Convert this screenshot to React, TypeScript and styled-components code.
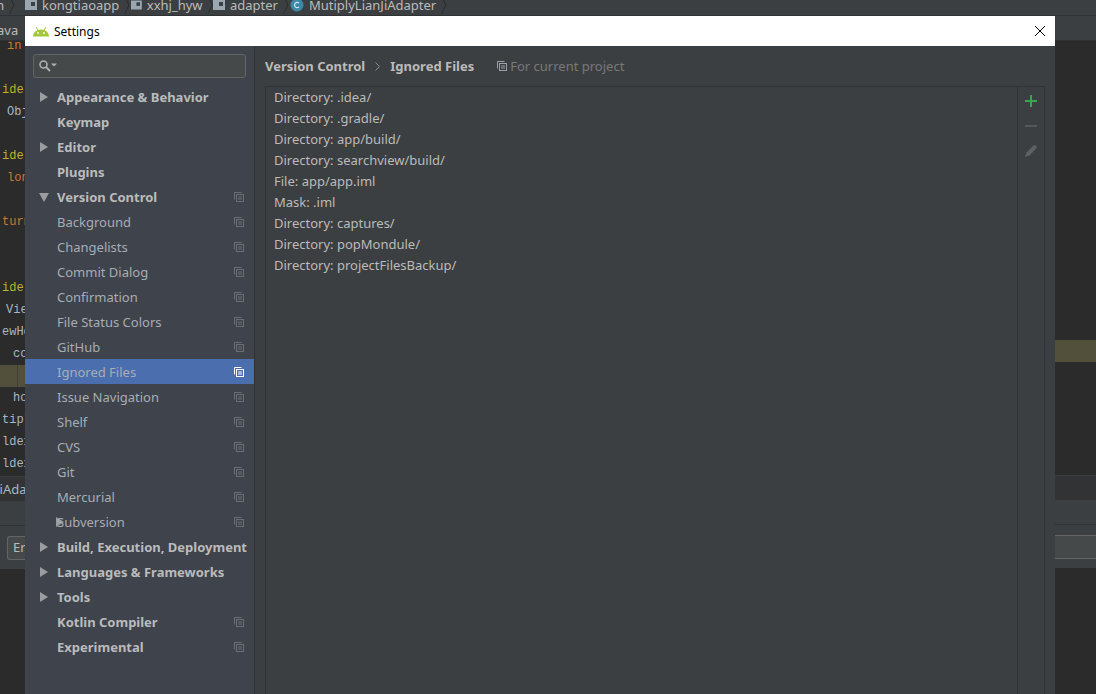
import React from 'react';
import styled, { createGlobalStyle } from 'styled-components';

// --- Dados ---
type NavItem = {
  label: string;
  level: 0 | 1;
  arrow?: 'right' | 'down';
  copy?: boolean;
  selected?: boolean;
};

const navItems: NavItem[] = [
  { label: 'Appearance & Behavior', level: 0, arrow: 'right' },
  { label: 'Keymap', level: 0 },
  { label: 'Editor', level: 0, arrow: 'right' },
  { label: 'Plugins', level: 0 },
  { label: 'Version Control', level: 0, arrow: 'down', copy: true },
  { label: 'Background', level: 1, copy: true },
  { label: 'Changelists', level: 1, copy: true },
  { label: 'Commit Dialog', level: 1, copy: true },
  { label: 'Confirmation', level: 1, copy: true },
  { label: 'File Status Colors', level: 1, copy: true },
  { label: 'GitHub', level: 1, copy: true },
  { label: 'Ignored Files', level: 1, copy: true, selected: true },
  { label: 'Issue Navigation', level: 1, copy: true },
  { label: 'Shelf', level: 1, copy: true },
  { label: 'CVS', level: 1, copy: true },
  { label: 'Git', level: 1, copy: true },
  { label: 'Mercurial', level: 1, copy: true },
  { label: 'Subversion', level: 1, arrow: 'right', copy: true },
  { label: 'Build, Execution, Deployment', level: 0, arrow: 'right' },
  { label: 'Languages & Frameworks', level: 0, arrow: 'right' },
  { label: 'Tools', level: 0, arrow: 'right' },
  { label: 'Kotlin Compiler', level: 0, copy: true },
  { label: 'Experimental', level: 0, copy: true },
];

const ignoredFiles = [
  'Directory: .idea/',
  'Directory: .gradle/',
  'Directory: app/build/',
  'Directory: searchview/build/',
  'File: app/app.iml',
  'Mask: .iml',
  'Directory: captures/',
  'Directory: popMondule/',
  'Directory: projectFilesBackup/',
];

type CodeKind = 'plain' | 'keyword' | 'note';
const codeLines: { text: string; kind?: CodeKind; indent?: number; marked?: boolean }[] = [
  { text: 'in', kind: 'keyword', indent: 7 },
  { text: '' },
  { text: 'ide', kind: 'note' },
  { text: 'Obj', indent: 7 },
  { text: '' },
  { text: 'ide', kind: 'note' },
  { text: 'lon', kind: 'keyword', indent: 7 },
  { text: '' },
  { text: 'turn', kind: 'keyword' },
  { text: '' },
  { text: '' },
  { text: 'ide', kind: 'note' },
  { text: 'Vie', indent: 6 },
  { text: 'ewHo' },
  { text: 'co', indent: 13 },
  { text: '', marked: true },
  { text: 'ho', indent: 13 },
  { text: 'tipl' },
  { text: 'ldex' },
  { text: 'ldex' },
];

// --- Estilização ---
const GlobalStyle = createGlobalStyle`
  html, body {
    margin: 0;
    padding: 0;
    background: #2b2b2b;
  }
`;

const Screen = styled.div`
  position: relative;
  width: 1096px;
  height: 694px;
  overflow: hidden;
  background: #2b2b2b;
  font-family: 'Noto Sans', sans-serif;
  font-size: 13px;
  color: #bbbbbb;
`;

const Breadcrumbs = styled.div`
  display: flex;
  align-items: flex-end;
  height: 15px;
  padding-bottom: 0;
  background: #3c3f41;
  border-bottom: 1px solid #2f3132;
  overflow: hidden;
  line-height: 18px;
  white-space: nowrap;
`;

const Crumb = styled.div<{ $width: number }>`
  display: flex;
  flex: none;
  align-items: center;
  gap: 5px;
  width: ${(p) => p.$width}px;
  height: 18px;
  margin-bottom: 1px;
`;

const IdeBody = styled.div`
  display: flex;
  justify-content: space-between;
  height: 678px;
`;

const EditorSide = styled.div<{ $width: number }>`
  width: ${(p) => p.$width}px;
  overflow: hidden;
`;

const TabBar = styled.div`
  position: relative;
  z-index: 1;
  box-sizing: border-box;
  height: 25px;
  background: #3c3f41;
  border-bottom: 1px solid #323232;
  font-size: 13px;
  line-height: 28px;
  text-indent: -3px;
  white-space: nowrap;
`;

const Code = styled.div`
  margin-top: -6px;
  height: 441px;
  font-family: 'Liberation Mono', monospace;
  font-size: 12px;
  line-height: 22px;
  white-space: pre;
`;

const CodeLine = styled.div<{ $kind?: CodeKind; $indent?: number; $marked?: boolean }>`
  height: 22px;
  padding-left: ${(p) => 2 + (p.$indent ?? 0) - (p.$indent ? 2 : 0)}px;
  background: ${(p) => (p.$marked ? 'linear-gradient(90deg, #52503a 17px, #3f3f36 17px, #3f3f36 18px, #52503a 18px)' : 'none')};
  color: ${(p) => (p.$kind === 'keyword' ? '#cc7832' : p.$kind === 'note' ? '#bbb529' : '#a9b7c6')};
`;

const FileTab = styled.div`
  box-sizing: border-box;
  height: 25px;
  background: #313335;
  border-top: 1px solid #3a3c3e;
  color: #a9b7c6;
  line-height: 24px;
  text-indent: -4px;
  white-space: nowrap;
`;

const ToolStrip = styled.div`
  box-sizing: border-box;
  height: 25px;
  background: #3c3f41;
  border-bottom: 1px solid #323232;
`;

const FilterArea = styled.div`
  height: 43px;
  box-sizing: border-box;
  padding-top: 10px;
  background: #3c3f41;
`;

const FilterInput = styled.div<{ $side: 'left' | 'right' }>`
  box-sizing: border-box;
  height: 24px;
  margin-left: ${(p) => (p.$side === 'left' ? '7px' : '0')};
  padding-left: 5px;
  background: #45494a;
  border: 1px solid #646464;
  border-left-width: ${(p) => (p.$side === 'left' ? '1px' : '0')};
  border-right-width: 0;
  border-radius: ${(p) => (p.$side === 'left' ? '3px 0 0 3px' : '0')};
  line-height: 21px;
  white-space: nowrap;
  overflow: hidden;
`;

const MarkedLine = styled.div`
  height: 22px;
  background: #52503a;
`;

const SideTabBar = styled.div`
  box-sizing: border-box;
  height: 26px;
  background: #3c3f41;
  border-top: 1px solid #4a4c4d;
  border-bottom: 1px solid #4a4c4d;
`;

const Spacer = styled.div<{ $height: number }>`
  height: ${(p) => p.$height}px;
`;

const Dialog = styled.div`
  position: absolute;
  left: 25px;
  top: 16px;
  display: flex;
  flex-direction: column;
  width: 1030px;
  height: 678px;
  background: #3c3f41;
`;

const TitleBar = styled.div`
  display: flex;
  flex: none;
  align-items: center;
  gap: 5px;
  height: 30px;
  padding: 0 10px 0 8px;
  background: #ffffff;
  color: #000000;
  font-size: 12px;
`;

const CloseButton = styled.div`
  display: flex;
  margin-left: auto;
`;

const Columns = styled.div`
  display: flex;
  flex: 1;
  min-height: 0;
`;

const Sidebar = styled.nav`
  flex: none;
  box-sizing: border-box;
  width: 230px;
  padding-top: 8px;
  background: #3e434c;
  border-right: 1px solid #323232;
`;

const SearchBox = styled.div`
  display: flex;
  align-items: center;
  box-sizing: border-box;
  width: 213px;
  height: 24px;
  margin: 0 0 6px 8px;
  padding-left: 5px;
  background: #45494a;
  border: 1px solid #646464;
  border-radius: 3px;
`;

const NavRow = styled.div<{ $selected?: boolean }>`
  display: flex;
  align-items: center;
  height: 25px;
  padding-right: 10px;
  background: ${(p) => (p.$selected ? '#4b6eaf' : 'transparent')};
`;

const ArrowSlot = styled.span<{ $level: number }>`
  display: flex;
  flex: none;
  align-items: center;
  justify-content: center;
  width: 10px;
  margin-left: ${(p) => (p.$level === 0 ? 14 : 30)}px;
  margin-right: ${(p) => (p.$level === 0 ? 8 : -8)}px;
`;

const NavLabel = styled.span<{ $level: number }>`
  flex: 1;
  margin-left: ${(p) => (p.$level === 0 ? 0 : 0)}px;
  font-weight: ${(p) => (p.$level === 0 ? 700 : 400)};
  color: ${(p) => (p.$level === 0 ? '#bbbbbb' : '#a8adb3')};
  white-space: nowrap;
`;

const Content = styled.main`
  display: flex;
  flex: 1;
  flex-direction: column;
  min-width: 0;
  padding: 0 10px 0 10px;
`;

const Header = styled.header`
  display: flex;
  flex: none;
  align-items: center;
  height: 40px;
`;

const HeaderTitle = styled.span`
  font-weight: 700;
  color: #bbbbbb;
`;

const HeaderSep = styled.span`
  display: flex;
  margin: 0 10px;
`;

const HeaderNote = styled.span`
  display: flex;
  align-items: center;
  gap: 3px;
  margin-left: 23px;
  color: #787878;
`;

const ListFrame = styled.section`
  display: flex;
  flex: 1;
  min-height: 0;
  border: 1px solid #323232;
  border-bottom: 0;
`;

const FileList = styled.ul`
  flex: 1;
  margin: 0;
  padding: 0 0 0 8px;
  list-style: none;
`;

const FileRow = styled.li`
  height: 21px;
  line-height: 21px;
  color: #bbbbbb;
`;

const SideTools = styled.div`
  display: flex;
  flex: none;
  flex-direction: column;
  align-items: center;
  width: 26px;
  padding-top: 1px;
  border-left: 1px solid #323232;
`;

const ToolButton = styled.div`
  display: flex;
  align-items: center;
  justify-content: center;
  height: 25px;
`;

// --- Ícones ---
const FolderIcon = () => (
  <svg width="12" height="12" viewBox="0 0 12 12">
    <rect x="0" y="1" width="12" height="10" fill="#9aa7b0" />
    <rect x="6" y="3" width="4" height="4" fill="#3c3f41" />
  </svg>
);

const ClassIcon = () => (
  <svg width="14" height="14" viewBox="0 0 14 14">
    <circle cx="7" cy="7" r="6.5" fill="#3d87a8" />
    <path d="M9 5.2A2.6 2.6 0 1 0 9 8.8" fill="none" stroke="#d5e6ee" strokeWidth="1.2" />
  </svg>
);

const Chevron = ({ color = '#2b2b2b' }: { color?: string }) => (
  <svg width="6" height="18" viewBox="0 0 6 18">
    <path d="M0.5 0L5 9L0.5 18" fill="none" stroke={color} />
  </svg>
);

const AndroidIcon = () => (
  <svg width="16" height="11" viewBox="0 0 16 11">
    <path d="M0 10.5C0 6.5 3.5 3.5 8 3.5s8 3 8 7z" fill="#a4c639" />
    <path d="M3 1l2 3M13 1l-2 3" stroke="#a4c639" strokeWidth="1" />
    <circle cx="5" cy="7" r="0.9" fill="#ffffff" />
    <circle cx="11" cy="7" r="0.9" fill="#ffffff" />
  </svg>
);

const CloseIcon = () => (
  <svg width="10" height="10" viewBox="0 0 10 10">
    <path d="M0 0L10 10M10 0L0 10" stroke="#000000" strokeWidth="1" />
  </svg>
);

const SearchIcon = () => (
  <svg width="18" height="12" viewBox="0 0 18 12">
    <circle cx="4.5" cy="4.5" r="3.5" fill="none" stroke="#afb1b3" strokeWidth="1.6" />
    <path d="M7 7l4 4" stroke="#afb1b3" strokeWidth="1.8" />
    <path d="M12 3.5h6l-3 3z" fill="#afb1b3" />
  </svg>
);

const Arrow = ({ direction }: { direction: 'right' | 'down' }) => (
  <svg width="10" height="10" viewBox="0 0 10 10">
    <path d={direction === 'right' ? 'M1 0L9 5L1 10z' : 'M0 1H10L5 10z'} fill="#9a9c9e" />
  </svg>
);

const CopyIcon = ({ color = '#6b6f73' }: { color?: string }) => (
  <svg width="10" height="10" viewBox="0 0 10 10">
    <path d="M0.5 7.5V0.5H7.5" fill="none" stroke={color} />
    <rect x="2.5" y="2.5" width="7" height="7" fill="none" stroke={color} />
    <path d="M4 5h4M4 7h4" stroke={color} />
  </svg>
);

const PlusIcon = () => (
  <svg width="12" height="12" viewBox="0 0 12 12">
    <path d="M0 6H12M6 0V12" stroke="#36a64f" strokeWidth="2" />
  </svg>
);

const MinusIcon = () => (
  <svg width="12" height="2" viewBox="0 0 12 2">
    <rect width="12" height="2" fill="#55585a" />
  </svg>
);

const PencilIcon = () => (
  <svg width="12" height="12" viewBox="0 0 12 12">
    <path d="M0 12L1.5 7.5L8.5 0.5Q10 -0.3 11.5 1Q12.3 2.5 11 3.8L4.5 10.5z" fill="#5e6164" />
  </svg>
);

// --- Componente da Página ---
const App = () => {
  return (
    <>
      <GlobalStyle />
      <Screen>
        <Breadcrumbs>
          <Crumb $width={25}>
            <span style={{ marginLeft: -8 }}>m</span>
            <Chevron />
          </Crumb>
          <Crumb $width={106}>
            <FolderIcon />
            <span>kongtiaoapp</span>
            <Chevron />
          </Crumb>
          <Crumb $width={82}>
            <FolderIcon />
            <span>xxhj_hyw</span>
            <Chevron />
          </Crumb>
          <Crumb $width={77}>
            <FolderIcon />
            <span>adapter</span>
            <Chevron />
          </Crumb>
          <Crumb $width={160}>
            <ClassIcon />
            <span>MutiplyLianJiAdapter</span>
            <Chevron />
          </Crumb>
        </Breadcrumbs>

        <IdeBody>
          <EditorSide $width={25}>
            <TabBar>ava</TabBar>
            <Code>
              {codeLines.map((line, i) => (
                <CodeLine key={i} $kind={line.kind} $indent={line.indent} $marked={line.marked}>
                  {line.text}
                </CodeLine>
              ))}
            </Code>
            <FileTab>JiAda</FileTab>
            <ToolStrip />
            <FilterArea>
              <FilterInput $side="left">Er</FilterInput>
            </FilterArea>
          </EditorSide>

          <EditorSide $width={41}>
            <TabBar />
            <Spacer $height={299} />
            <MarkedLine />
            <Spacer $height={113} />
            <FileTab />
            <ToolStrip />
            <FilterArea>
              <FilterInput $side="right" />
            </FilterArea>
          </EditorSide>
        </IdeBody>

        <Dialog>
          <TitleBar>
            <AndroidIcon />
            <span>Settings</span>
            <CloseButton>
              <CloseIcon />
            </CloseButton>
          </TitleBar>
          <Columns>
            <Sidebar>
              <SearchBox>
                <SearchIcon />
              </SearchBox>
              {navItems.map((item) => (
                <NavRow key={item.label} $selected={item.selected}>
                  <ArrowSlot $level={item.level}>
                    {item.arrow && <Arrow direction={item.arrow} />}
                  </ArrowSlot>
                  <NavLabel $level={item.level}>{item.label}</NavLabel>
                  {item.copy && <CopyIcon color={item.selected ? '#ffffff' : undefined} />}
                </NavRow>
              ))}
            </Sidebar>
            <Content>
              <Header>
                <HeaderTitle>Version Control</HeaderTitle>
                <HeaderSep>
                  <svg width="5" height="9" viewBox="0 0 5 9">
                    <path d="M0.5 0.5L4.5 4.5L0.5 8.5" fill="none" stroke="#8a8c8e" />
                  </svg>
                </HeaderSep>
                <HeaderTitle>Ignored Files</HeaderTitle>
                <HeaderNote>
                  <CopyIcon color="#9aa0a6" />
                  For current project
                </HeaderNote>
              </Header>
              <ListFrame>
                <FileList>
                  {ignoredFiles.map((file) => (
                    <FileRow key={file}>{file}</FileRow>
                  ))}
                </FileList>
                <SideTools>
                  <ToolButton><PlusIcon /></ToolButton>
                  <ToolButton><MinusIcon /></ToolButton>
                  <ToolButton><PencilIcon /></ToolButton>
                </SideTools>
              </ListFrame>
            </Content>
          </Columns>
        </Dialog>
      </Screen>
    </>
  );
};

export default App;
